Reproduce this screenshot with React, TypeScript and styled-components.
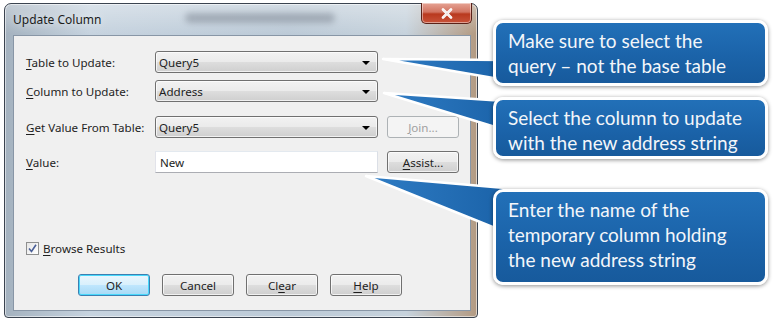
import React from 'react';
import styled, { createGlobalStyle, css } from 'styled-components';

const GlobalStyle = createGlobalStyle`
  html, body {
    margin: 0;
    padding: 0;
    background: #ffffff;
  }
  #root {
    width: 774px;
    height: 320px;
    overflow: hidden;
  }
`;

const Page = styled.div`
  position: relative;
  width: 774px;
  height: 320px;
  display: flex;
  align-items: flex-start;
  padding: 3px 0 0 4px;
  box-sizing: border-box;
`;

const Window = styled.div`
  width: 474px;
  height: 315px;
  box-sizing: border-box;
  border: 1px solid #3b4450;
  border-radius: 7px 7px 4px 4px;
  background:
    linear-gradient(180deg, rgba(255, 255, 255, 0.35) 0%, rgba(255, 255, 255, 0) 30px),
    linear-gradient(90deg, #a4b2bf 0%, #c6d3df 18%, #bccad7 60%, #c6d2dc 85%, #b39a82 100%);
  box-shadow: inset 0 0 0 1px rgba(255, 255, 255, 0.55);
  display: flex;
  flex-direction: column;
`;

const TitleBar = styled.div`
  position: relative;
  height: 31px;
  display: flex;
  align-items: center;
  padding: 0 0 0 8px;
`;

const Title = styled.span`
  font-family: 'Noto Sans', 'Open Sans', sans-serif;
  font-size: 12px;
  color: #1c1c1c;
  text-shadow: 0 0 8px rgba(255, 255, 255, 0.9);
`;

const BlurredCaption = styled.div`
  position: absolute;
  left: 180px;
  top: 9px;
  width: 150px;
  height: 10px;
  border-radius: 5px;
  background: #7f8894;
  filter: blur(3px);
  opacity: 0.55;
`;

const CloseButton = styled.div`
  position: absolute;
  right: 5px;
  top: -1px;
  width: 51px;
  height: 21px;
  box-sizing: border-box;
  border: 1px solid #5a2218;
  border-top: none;
  border-radius: 0 0 5px 5px;
  background: linear-gradient(180deg, #e6a394 0%, #d27461 45%, #b9391e 55%, #c8533a 100%);
  box-shadow: inset 0 0 0 1px rgba(255, 255, 255, 0.45);
  display: flex;
  align-items: center;
  justify-content: center;
`;

const Client = styled.div`
  flex: 1;
  margin: 0 6px 6px 8px;
  background: #f0f0f0;
  border: 1px solid #8896a6;
  display: flex;
  flex-direction: column;
  padding: 15px 12px 0 12px;
  font-family: 'Noto Sans', 'Open Sans', sans-serif;
  font-size: 11.6px;
  color: #1e1e1e;
`;

const FieldRow = styled.div<{ $gap: number }>`
  display: flex;
  align-items: center;
  height: 22px;
  margin-top: ${(p) => p.$gap}px;
`;

const Label = styled.span`
  width: 129px;
  flex: none;
`;

const Key = styled.span`
  text-decoration: underline;
  text-underline-offset: 2px;
`;

const controlBox = css`
  width: 223px;
  height: 22px;
  box-sizing: border-box;
  flex: none;
`;

const Combo = styled.div`
  ${controlBox};
  border: 1px solid #707070;
  border-radius: 3px;
  background: linear-gradient(180deg, #f2f2f2 0%, #ebebeb 48%, #dddddd 52%, #cfcfcf 100%);
  box-shadow: inset 0 0 0 1px rgba(255, 255, 255, 0.7);
  display: flex;
  align-items: center;
  padding: 0 0 0 3px;
  position: relative;
`;

const Arrow = styled.span`
  position: absolute;
  right: 7px;
  top: 9px;
  width: 0;
  height: 0;
  border-left: 4px solid transparent;
  border-right: 4px solid transparent;
  border-top: 4px solid #000;
`;

const TextBox = styled.div`
  ${controlBox};
  border: 1px solid #abadb3;
  border-top-color: #e3e9ef;
  border-left-color: #e2e3ea;
  border-right-color: #dbdfe6;
  background: #ffffff;
  display: flex;
  align-items: center;
  padding: 0 0 0 4px;
`;

const Button = styled.div<{ $disabled?: boolean; $default?: boolean }>`
  width: 72px;
  height: 22px;
  box-sizing: border-box;
  flex: none;
  border: 1px solid #707070;
  border-radius: 3px;
  background: linear-gradient(180deg, #f2f2f2 0%, #ebebeb 48%, #dddddd 52%, #cfcfcf 100%);
  box-shadow: inset 0 0 0 1px rgba(255, 255, 255, 0.7);
  display: flex;
  align-items: center;
  justify-content: center;
  ${(p) =>
    p.$disabled &&
    css`
      border-color: #adb2b5;
      background: #f4f4f4;
      color: #a0a0a0;
      box-shadow: none;
    `}
  ${(p) =>
    p.$default &&
    css`
      border-color: #3c7fb1;
      background: linear-gradient(180deg, #eaf6fd 0%, #d9f0fc 48%, #bee6fd 52%, #a7d9f5 100%);
      box-shadow: inset 0 0 0 1px #48d8fb;
    `}
`;

const SideButton = styled(Button)`
  margin-left: 9px;
`;

const CheckRow = styled.label`
  display: flex;
  align-items: center;
  gap: 4px;
  margin-top: 68px;
  height: 15px;
`;

const CheckBox = styled.span`
  width: 13px;
  height: 13px;
  box-sizing: border-box;
  border: 1px solid #8e8f8f;
  background: linear-gradient(135deg, #e6e6e6 0%, #ffffff 100%);
  display: flex;
  align-items: center;
  justify-content: center;
`;

const ButtonBar = styled.div`
  display: flex;
  gap: 12px;
  margin-top: 18px;
  padding-left: 52px;
`;

const CalloutColumn = styled.div`
  position: relative;
  z-index: 2;
  margin-left: 15px;
  padding-top: 17px;
  display: flex;
  flex-direction: column;
`;

const Callout = styled.div<{ $gap: number; $h: number }>`
  width: 275px;
  height: ${(p) => p.$h}px;
  margin-top: ${(p) => p.$gap}px;
  box-sizing: border-box;
  border: 3px solid #ffffff;
  border-radius: 10px;
  background: linear-gradient(180deg, #2270b8 0%, #1b63a9 55%, #175a9c 100%);
  box-shadow: 0 1px 4px rgba(0, 0, 0, 0.45);
  padding: 5px 6px 0 12px;
  font-family: Lato, 'Open Sans', sans-serif;
  font-size: 19px;
  line-height: 25px;
  color: #f3f6fa;
  white-space: nowrap;
`;

const Tails = styled.svg`
  position: absolute;
  left: 0;
  top: 0;
  z-index: 1;
  pointer-events: none;
`;

const tails = [
  '383,59 505,60 505,80',
  '384,93 505,101 505,130',
  '366,176 505,188 505,232',
];

export default function App() {
  return (
    <>
      <GlobalStyle />
      <Page>
        <Window>
          <TitleBar>
            <Title>Update Column</Title>
            <BlurredCaption />
            <CloseButton>
              <svg width="12" height="11" viewBox="0 0 12 11">
                <path
                  d="M2 1.5 L10 9.5 M10 1.5 L2 9.5"
                  stroke="#ffffff"
                  strokeWidth="2.6"
                  strokeLinecap="round"
                />
                <path
                  d="M2 1.5 L10 9.5 M10 1.5 L2 9.5"
                  stroke="#6b2a1e"
                  strokeOpacity="0.25"
                  strokeWidth="0.6"
                />
              </svg>
            </CloseButton>
          </TitleBar>
          <Client>
            <FieldRow $gap={0}>
              <Label>
                <Key>T</Key>able to Update:
              </Label>
              <Combo>
                Query5
                <Arrow />
              </Combo>
            </FieldRow>
            <FieldRow $gap={7}>
              <Label>
                <Key>C</Key>olumn to Update:
              </Label>
              <Combo>
                Address
                <Arrow />
              </Combo>
            </FieldRow>
            <FieldRow $gap={14}>
              <Label>
                <Key>G</Key>et Value From Table:
              </Label>
              <Combo>
                Query5
                <Arrow />
              </Combo>
              <SideButton $disabled>
                <Key>J</Key>oin...
              </SideButton>
            </FieldRow>
            <FieldRow $gap={13}>
              <Label>
                <Key>V</Key>alue:
              </Label>
              <TextBox>New</TextBox>
              <SideButton>
                <Key>A</Key>ssist...
              </SideButton>
            </FieldRow>
            <CheckRow>
              <CheckBox>
                <svg width="9" height="9" viewBox="0 0 9 9">
                  <path d="M1 4.5 L3.5 7.5 L8 0.8" fill="none" stroke="#4a5f97" strokeWidth="1.6" />
                </svg>
              </CheckBox>
              <span>
                <Key>B</Key>rowse Results
              </span>
            </CheckRow>
            <ButtonBar>
              <Button $default>OK</Button>
              <Button>Cancel</Button>
              <Button>
                Cl<Key>e</Key>ar
              </Button>
              <Button>
                <Key>H</Key>elp
              </Button>
            </ButtonBar>
          </Client>
        </Window>
        <CalloutColumn>
          <Callout $gap={0} $h={66}>
            Make sure to select the
            <br />
            query – not the base table
          </Callout>
          <Callout $gap={11} $h={62}>
            Select the column to update
            <br />
            with the new address string
          </Callout>
          <Callout $gap={30} $h={96}>
            Enter the name of the
            <br />
            temporary column holding
            <br />
            the new address string
          </Callout>
        </CalloutColumn>
        <Tails width="774" height="320" viewBox="0 0 774 320">
          <defs>
            <linearGradient id="tailFill" x1="0" y1="0" x2="1" y2="0">
              <stop offset="0" stopColor="#2f7cc4" />
              <stop offset="1" stopColor="#1b63a9" />
            </linearGradient>
          </defs>
          {tails.map((pts) => (
            <polygon
              key={pts}
              points={pts}
              fill="url(#tailFill)"
              stroke="#ffffff"
              strokeWidth="2.5"
              strokeLinejoin="round"
            />
          ))}
        </Tails>
      </Page>
    </>
  );
}
